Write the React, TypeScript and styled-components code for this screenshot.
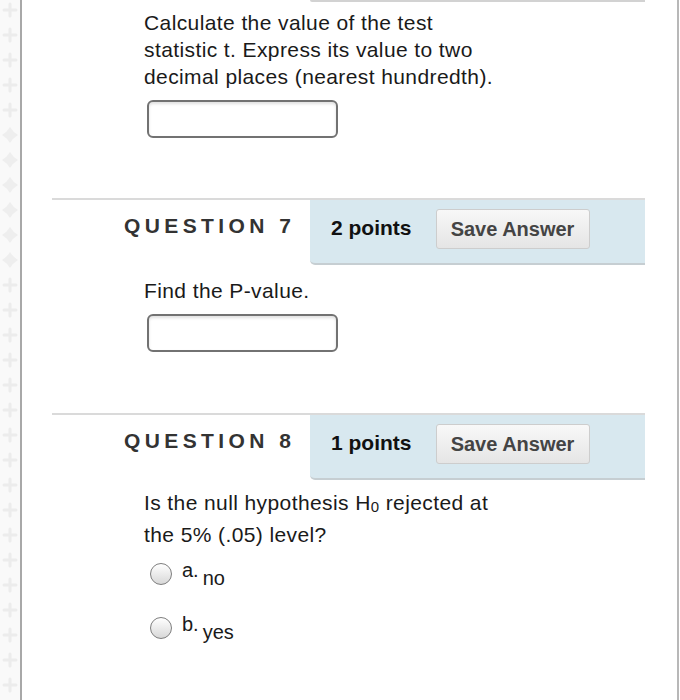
import React from "react";
import styled, { createGlobalStyle } from "styled-components";

const GlobalStyle = createGlobalStyle`
  body {
    margin: 0;
    background: #ffffff;
    font-family: "Liberation Sans", Arial, Helvetica, sans-serif;
    color: #1a1a1a;
  }
`;

const Page = styled.div`
  display: flex;
  height: 700px;
  overflow: hidden;
  padding-right: 1px;
`;

const LeftRail = styled.div`
  width: 20px;
  flex-shrink: 0;
  background: #f9f9f9;
  border-right: 2px solid #a8a8a8;
`;

const Main = styled.div`
  flex: 1;
  display: flex;
  flex-direction: column;
  padding: 0 32px 0 30px;
  border-right: 2px solid #b8b8b8;
`;

const PrevEdge = styled.div`
  margin-left: 258px;
  height: 0;
  border-bottom: 2px solid #d2d2d2;
  border-bottom-left-radius: 4px;
`;

const Prompt = styled.div<{ $top: number; $line: number }>`
  margin-top: ${(p) => p.$top}px;
  padding-left: 92px;
  font-size: 21px;
  letter-spacing: 0.4px;
  line-height: ${(p) => p.$line}px;
  color: #1a1a1a;
`;

const Sub = styled.span`
  font-size: 15px;
  vertical-align: -2px;
`;

const AnswerBox = styled.div`
  margin: 10px 0 0 95px;
  width: 191px;
  height: 38px;
  box-sizing: border-box;
  border: 2px solid #727272;
  border-radius: 6px;
  box-shadow: inset 0 2px 3px rgba(0, 0, 0, 0.12);
  background: #fff;
`;

const QuestionHeader = styled.div<{ $top: number }>`
  margin-top: ${(p) => p.$top}px;
  display: flex;
  height: 65px;
  border-top: 2px solid #dadada;
`;

const QuestionLabel = styled.div`
  width: 186px;
  padding: 14px 0 0 72px;
  font-size: 21px;
  font-weight: bold;
  letter-spacing: 4.4px;
  color: #333;
  white-space: nowrap;
`;

const PointsPanel = styled.div`
  flex: 1;
  display: flex;
  align-items: flex-start;
  padding: 9px 0 0 21px;
  background: #d8e8ef;
  border-bottom: 2px solid #c6ced2;
  border-bottom-left-radius: 5px;
`;

const Points = styled.div`
  margin-top: 7px;
  font-size: 21px;
  font-weight: bold;
  color: #111;
  white-space: nowrap;
`;

const SaveButton = styled.button`
  margin-left: 24px;
  width: 154px;
  height: 40px;
  padding: 0;
  background: linear-gradient(#f8f8f8, #e5e5e5);
  border: 1px solid #cdcdcd;
  border-radius: 3px;
  font-family: "Liberation Sans", Arial, sans-serif;
  font-size: 20px;
  font-weight: bold;
  color: #444;
`;

const Options = styled.div`
  display: flex;
  flex-direction: column;
  gap: 32px;
  margin: 14px 0 0 98px;
`;

const OptionRow = styled.label`
  display: flex;
  align-items: center;
  height: 22px;
`;

const RadioCircle = styled.span`
  width: 22px;
  height: 22px;
  box-sizing: border-box;
  border-radius: 50%;
  border: 1.5px solid #7e7e7e;
  background: linear-gradient(#ffffff, #d8d8d8);
  flex-shrink: 0;
`;

const OptionText = styled.span`
  margin-left: 10px;
  font-size: 20px;
  line-height: 20px;
  color: #1a1a1a;
  white-space: nowrap;
`;

const Letter = styled.span`
  vertical-align: 2px;
`;

const Choice = styled.span`
  margin-left: 4px;
  vertical-align: -6px;
`;

const railMarks = Array.from({ length: 28 }, (_, i) => 10 + i * 25);

function RailPattern() {
  return (
    <svg width="20" height="700" viewBox="0 0 20 700">
      {railMarks.map((y) =>
        y > 125 && y < 265 ? (
          <path
            key={y}
            d={`M10 ${y - 8} Q13 ${y - 3} 18 ${y} Q13 ${y + 3} 10 ${y + 8} Q7 ${y + 3} 2 ${y} Q7 ${y - 3} 10 ${y - 8} Z`}
            fill="#eeeeee"
          />
        ) : (
          <path
            key={y}
            d={`M10 ${y - 6} V${y + 6} M4 ${y} H16`}
            stroke="#ececec"
            strokeWidth="3"
            strokeLinecap="round"
          />
        )
      )}
    </svg>
  );
}

function Header({ num, points }: { num: number; points: number }) {
  return (
    <>
      <QuestionLabel>QUESTION {num}</QuestionLabel>
      <PointsPanel>
        <Points>{points} points</Points>
        <SaveButton>Save Answer</SaveButton>
      </PointsPanel>
    </>
  );
}

export default function App() {
  return (
    <>
      <GlobalStyle />
      <Page>
        <LeftRail>
          <RailPattern />
        </LeftRail>
        <Main>
          <PrevEdge />
          <Prompt $top={7} $line={27}>
            Calculate the value of the test
            <br />
            statistic t. Express its value to two
            <br />
            decimal places (nearest hundredth).
          </Prompt>
          <AnswerBox />

          <QuestionHeader $top={60}>
            <Header num={7} points={2} />
          </QuestionHeader>
          <Prompt $top={12} $line={27}>
            Find the P-value.
          </Prompt>
          <AnswerBox />

          <QuestionHeader $top={61}>
            <Header num={8} points={1} />
          </QuestionHeader>
          <Prompt $top={9} $line={28}>
            Is the null hypothesis H<Sub>0</Sub> rejected at
            <br />
            the 5% (.05) level?
          </Prompt>
          <Options>
            <OptionRow>
              <RadioCircle />
              <OptionText>
                <Letter>a.</Letter>
                <Choice>no</Choice>
              </OptionText>
            </OptionRow>
            <OptionRow>
              <RadioCircle />
              <OptionText>
                <Letter>b.</Letter>
                <Choice>yes</Choice>
              </OptionText>
            </OptionRow>
          </Options>
        </Main>
      </Page>
    </>
  );
}
